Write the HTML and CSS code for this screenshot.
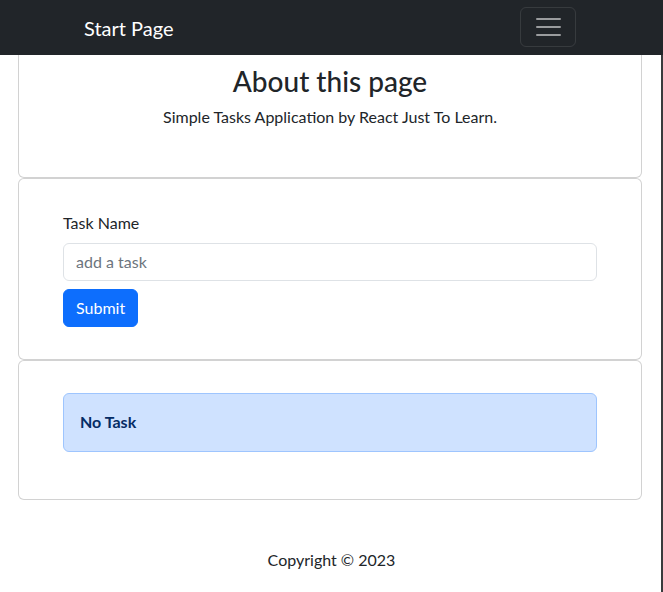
FILE: index.html
```html
<!DOCTYPE html>
<html lang="en">
<head>
<meta charset="utf-8">
<title>Start Page</title>
<link rel="stylesheet" href="styles.css">
</head>
<body>
<nav class="navbar">
  <div class="navbar-inner">
    <a class="brand" href="#">Start Page</a>
    <button class="toggler" type="button" aria-label="Toggle navigation">
      <svg width="30" height="30" viewBox="0 0 30 30" aria-hidden="true">
        <path d="M4 7h23M4 15h23M4 23h23" stroke="rgba(255,255,255,0.55)" stroke-width="2" stroke-linecap="round"/>
      </svg>
    </button>
  </div>
</nav>
<main class="main">
  <section class="card card-about">
    <h2 class="about-title">About this page</h2>
    <p class="about-text">Simple Tasks Application by React Just To Learn.</p>
  </section>
  <section class="card card-form">
    <form class="task-form">
      <label class="form-label" for="task">Task Name</label>
      <input class="form-control" id="task" type="text" placeholder="add a task">
      <button class="btn-primary" type="submit">Submit</button>
    </form>
  </section>
  <section class="card card-list">
    <div class="alert">No Task</div>
  </section>
</main>
<footer class="footer">Copyright © 2023</footer>
</body>
</html>
```
FILE: styles.css
```css
* { box-sizing: border-box; }
html { box-shadow: inset -2px 0 0 #3a3b3d; min-height: 100%; }
body {
  margin: 0;
  font-family: Lato, "Noto Sans", sans-serif;
  font-size: 16px;
  line-height: 1.5;
  color: #212529;
  background: #fff;
}
.navbar {
  background: #212529;
  height: 55px;
}
.navbar-inner {
  height: 100%;
  display: flex;
  align-items: center;
  justify-content: space-between;
  padding: 0 87px 0 84px;
}
.brand {
  color: #fff;
  text-decoration: none;
  font-size: 20px;
  line-height: 30px;
  margin-top: 1px;
}
.toggler {
  width: 56px;
  height: 40px;
  margin-top: -2px;
  background: transparent;
  border: 1px solid rgba(255,255,255,0.1);
  border-radius: 6px;
  display: flex;
  align-items: center;
  justify-content: center;
  padding: 0;
}
.main {
  padding: 0 21px 0 18px;
}
.card {
  border: 1px solid rgba(0,0,0,0.175);
  border-radius: 6px;
  background: #fff;
}
.card-about {
  border-top: 0;
  border-top-left-radius: 0;
  border-top-right-radius: 0;
  padding: 10px 44px 48px;
  text-align: center;
}
.about-title {
  margin: 0 0 6px;
  font-size: 28px;
  font-weight: 500;
  line-height: 1.2;
}
.about-text {
  margin: 0;
}
.card-form {
  padding: 32px 44px 32px;
}
.task-form {
  display: flex;
  flex-direction: column;
  align-items: flex-start;
}
.form-label {
  margin-bottom: 8px;
}
.form-control {
  width: 100%;
  height: 38px;
  padding: 6px 12px;
  font: inherit;
  color: #212529;
  border: 1px solid #dee2e6;
  border-radius: 6px;
  margin-bottom: 8px;
}
.form-control::placeholder { color: #6c757d; }
.btn-primary {
  height: 38px;
  padding: 6px 12px;
  font: inherit;
  color: #fff;
  background: #0d6efd;
  border: 1px solid #0d6efd;
  border-radius: 6px;
}
.card-list {
  padding: 32px 44px 47px;
}
.alert {
  height: 59px;
  display: flex;
  align-items: center;
  padding: 0 16px;
  background: #cfe2ff;
  border: 1px solid #9ec5fe;
  border-radius: 6px;
  color: #052c65;
  font-weight: 700;
}
.footer {
  text-align: center;
  padding-top: 48px;
}
```
